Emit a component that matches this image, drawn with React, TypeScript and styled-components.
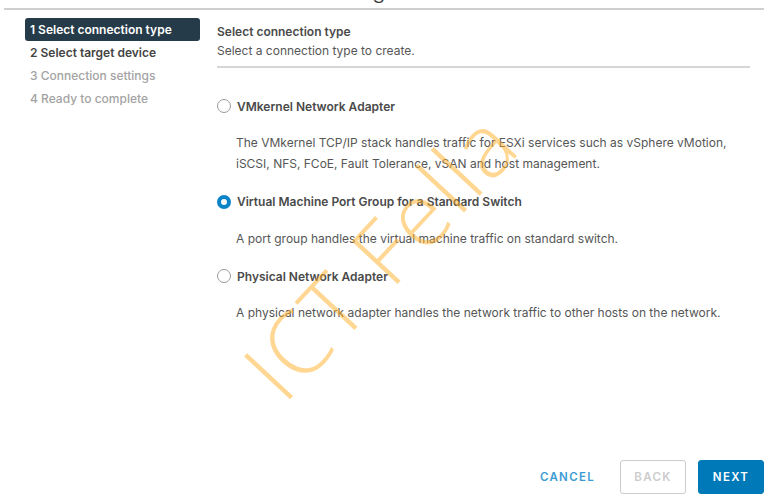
import React, { useState } from 'react';
import styled, { createGlobalStyle } from 'styled-components';

const GlobalStyle = createGlobalStyle`
  html, body {
    margin: 0;
    padding: 0;
    background: #fff;
  }
  body {
    font-family: Inter, "Liberation Sans", sans-serif;
    color: #565656;
  }
`;

const Page = styled.div`
  position: relative;
  height: 499px;
  display: flex;
  flex-direction: column;
  overflow: hidden;
`;

// Modal title sits mostly above the visible area, only a descender peeks out.
const TitleBar = styled.div`
  height: 8px;
  margin: 0 4px;
  border-bottom: 2px solid #cfcfcf;
  overflow: hidden;
`;

const Title = styled.h2`
  margin: 0;
  padding-left: 216px;
  font-size: 22px;
  font-weight: 300;
  line-height: 22px;
  color: #333;
  transform: translateY(-21px);
`;

const Body = styled.div`
  display: grid;
  grid-template-columns: 175px 533px;
  column-gap: 17px;
  padding: 8px 0 0 25px;
`;

const StepList = styled.ol`
  list-style: none;
  margin: 0;
  padding: 0;
`;

const Step = styled.li<{ $state: 'active' | 'enabled' | 'disabled' }>`
  height: 23px;
  line-height: 23px;
  padding-left: 5px;
  border-radius: 3px;
  font-size: 12px;
  font-weight: ${({ $state }) => ($state === 'disabled' ? 500 : 600)};
  background: ${({ $state }) => ($state === 'active' ? '#263b49' : 'transparent')};
  color: ${({ $state }) =>
    $state === 'active' ? '#fff' : $state === 'enabled' ? '#444' : '#a3a3a3'};
`;

const Content = styled.div`
  display: flex;
  flex-direction: column;
`;

const PageHeader = styled.div`
  padding-top: 4px;
  padding-bottom: 6px;
  border-bottom: 2px solid #d6d6d6;
`;

const PageTitle = styled.div`
  font-size: 12px;
  font-weight: 600;
  color: #4a4a4a;
  line-height: 19px;
`;

const PageSubtitle = styled.div`
  font-size: 12px;
  color: #565656;
  line-height: 19px;
`;

const Options = styled.div`
  padding-top: 26px;
  display: flex;
  flex-direction: column;
`;

const Option = styled.label`
  display: flex;
  flex-direction: column;
  cursor: pointer;
`;

const OptionRow = styled.div`
  display: flex;
  align-items: center;
  gap: 6px;
  height: 24px;
`;

const Radio = styled.span<{ $checked: boolean }>`
  width: 14px;
  height: 14px;
  box-sizing: border-box;
  border-radius: 50%;
  flex: none;
  border: ${({ $checked }) => ($checked ? '4px solid #0a84c6' : '1px solid #9a9a9a')};
  background: #fff;
`;

const OptionLabel = styled.span`
  font-size: 12px;
  font-weight: 600;
  color: #4a4a4a;
`;

const OptionDesc = styled.p`
  margin: 14px 0 15.5px 19px;
  font-size: 12px;
  line-height: 21px;
  color: #565656;
`;

const Footer = styled.div`
  margin-top: auto;
  display: flex;
  justify-content: flex-end;
  align-items: center;
  gap: 12px;
  padding: 0 4px 5px 0;
`;

const Button = styled.button<{ $variant: 'flat' | 'outline' | 'primary' }>`
  height: 34px;
  min-width: 66px;
  padding: 0 12px;
  border-radius: 3px;
  font-family: Inter, "Liberation Sans", sans-serif;
  font-size: 11.5px;
  font-weight: 600;
  letter-spacing: 1.3px;
  cursor: pointer;
  border: 1px solid
    ${({ $variant }) =>
      $variant === 'outline' ? '#cccccc' : $variant === 'primary' ? '#0079b8' : 'transparent'};
  background: ${({ $variant }) => ($variant === 'primary' ? '#0079b8' : '#fff')};
  color: ${({ $variant }) =>
    $variant === 'primary' ? '#fff' : $variant === 'outline' ? '#cccccc' : '#3d9bd3'};
`;

const Watermark = styled.div`
  position: absolute;
  left: 379px;
  top: 254px;
  transform: translate(-50%, -50%) rotate(-47deg);
  font-family: "Open Sans", "Liberation Sans", sans-serif;
  font-weight: 300;
  font-size: 88px;
  letter-spacing: 3px;
  line-height: 1;
  white-space: nowrap;
  color: rgba(255, 176, 40, 0.5);
  pointer-events: none;
`;

const steps = [
  { label: '1 Select connection type', state: 'active' as const },
  { label: '2 Select target device', state: 'enabled' as const },
  { label: '3 Connection settings', state: 'disabled' as const },
  { label: '4 Ready to complete', state: 'disabled' as const },
];

const options = [
  {
    id: 'vmkernel',
    label: 'VMkernel Network Adapter',
    desc: 'The VMkernel TCP/IP stack handles traffic for ESXi services such as vSphere vMotion, iSCSI, NFS, FCoE, Fault Tolerance, vSAN and host management.',
  },
  {
    id: 'portgroup',
    label: 'Virtual Machine Port Group for a Standard Switch',
    desc: 'A port group handles the virtual machine traffic on standard switch.',
  },
  {
    id: 'physical',
    label: 'Physical Network Adapter',
    desc: 'A physical network adapter handles the network traffic to other hosts on the network.',
  },
];

export default function App() {
  const [selected, setSelected] = useState('portgroup');

  return (
    <Page>
      <GlobalStyle />
      <TitleBar>
        <Title>Add Networking</Title>
      </TitleBar>

      <Body>
        <StepList>
          {steps.map(s => (
            <Step key={s.label} $state={s.state}>{s.label}</Step>
          ))}
        </StepList>

        <Content>
          <PageHeader>
            <PageTitle>Select connection type</PageTitle>
            <PageSubtitle>Select a connection type to create.</PageSubtitle>
          </PageHeader>

          <Options>
            {options.map(o => (
              <Option key={o.id} onClick={() => setSelected(o.id)}>
                <OptionRow>
                  <Radio $checked={selected === o.id} />
                  <OptionLabel>{o.label}</OptionLabel>
                </OptionRow>
                <OptionDesc>{o.desc}</OptionDesc>
              </Option>
            ))}
          </Options>
        </Content>
      </Body>

      <Footer>
        <Button $variant="flat">CANCEL</Button>
        <Button $variant="outline">BACK</Button>
        <Button $variant="primary">NEXT</Button>
      </Footer>

      <Watermark>ICT Fella</Watermark>
    </Page>
  );
}
